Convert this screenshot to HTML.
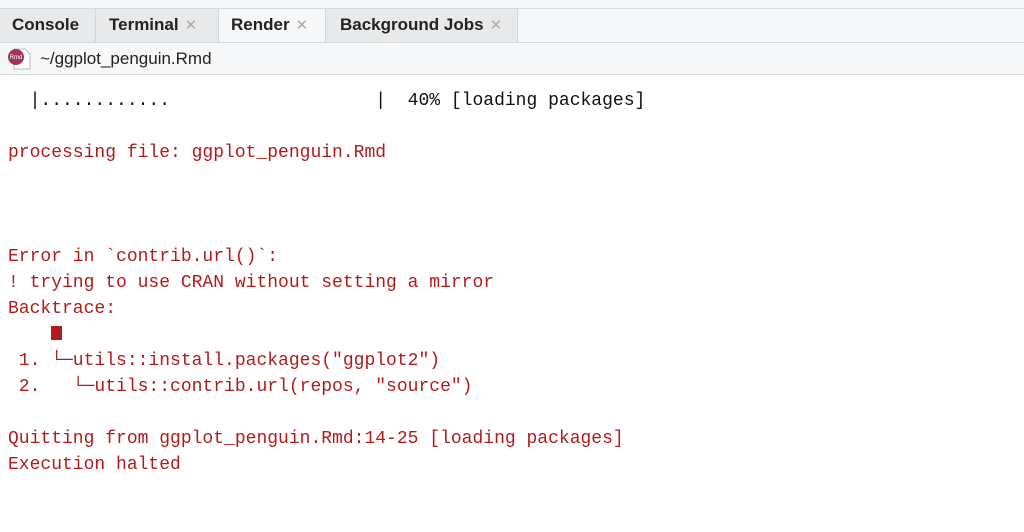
<!DOCTYPE html>
<html><head><meta charset="utf-8"><style>
body{margin:0;width:1024px;height:532px;background:#fff;overflow:hidden;font-family:"Liberation Sans",sans-serif}
.top{position:absolute;left:0;top:0;width:1024px;height:8px;background:#f5f6f7;border-bottom:1px solid #d6d8da}
.tabs{position:absolute;left:0;top:9px;width:1024px;height:33px;background:#f5f6f7}
.tab{position:absolute;top:0;height:33px;background:#e8e9ea;border-right:1px solid #d3d5d7;font-weight:bold;font-size:17px;color:#222;line-height:32px;box-sizing:border-box;padding-left:12px}
.tab .x{color:#aaa;font-size:15px;margin-left:6px;font-weight:normal}
.act{background:#f6f7f8}
.path{position:absolute;left:0;top:42px;width:1024px;height:33px;background:#f6f7f8;border-top:1px solid #d6d8da;border-bottom:1px solid #d6d8da;box-sizing:border-box;font-size:17px;color:#222;line-height:32px}
pre{position:absolute;left:8px;top:88px;margin:0;font-family:"Liberation Mono",monospace;font-size:18px;line-height:26px;color:#b31b1b}
.blk{color:#111}
.sq{display:inline-block;width:11px;height:14px;background:#b31b1b;vertical-align:-1px}
</style></head><body>
<div class="top"></div>
<div class="tabs">
<div class="tab" style="left:0;width:96px">Console</div>
<div class="tab" style="left:96px;width:123px;padding-left:13px">Terminal<span class="x">✕</span></div>
<div class="tab act" style="left:219px;width:107px">Render<span class="x">✕</span></div>
<div class="tab" style="left:326px;width:192px;padding-left:14px">Background Jobs<span class="x">✕</span></div>
</div>
<div class="path">
<svg style="position:absolute;left:6px;top:5px" width="26" height="22" viewBox="0 0 26 22"><path d="M8 1h11l5 5v15H8z" fill="#fff" stroke="#bbb"/><circle cx="10" cy="9" r="8" fill="#a23455"/><text x="10" y="11" font-size="6" fill="#fff" text-anchor="middle" font-family="Liberation Sans">Rmd</text></svg>
<span style="position:absolute;left:40px">~/ggplot_penguin.Rmd</span></div>
<pre><span class="blk">  |............                   |  40% [loading packages]</span>

processing file: ggplot_penguin.Rmd



Error in `contrib.url()`:
! trying to use CRAN without setting a mirror
Backtrace:
    <span class="sq"></span>
 1. └─utils::install.packages("ggplot2")
 2.   └─utils::contrib.url(repos, "source")

Quitting from ggplot_penguin.Rmd:14-25 [loading packages]
Execution halted</pre>
</body></html>
